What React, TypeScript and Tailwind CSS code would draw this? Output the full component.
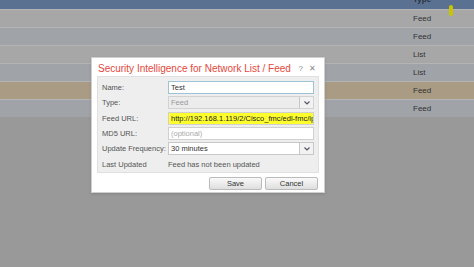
import React from 'react';

const rows = [
  { type: 'Feed', bg: 'bg-[#a7a7a7]' },
  { type: 'Feed', bg: 'bg-[#a0a3a8]' },
  { type: 'List', bg: 'bg-[#a7a7a7]' },
  { type: 'List', bg: 'bg-[#a0a3a8]' },
  { type: 'Feed', bg: 'bg-[#aa9b84]' },
  { type: 'Feed', bg: 'bg-[#a0a3a8]' },
];

const Field: React.FC<{ label: string; children: React.ReactNode }> = ({ label, children }) => (
  <div className="flex items-center h-[15.5px]">
    <span className="w-[66px] shrink-0 text-[#555]">{label}</span>
    {children}
  </div>
);

const Arrow = () => (
  <div className="w-[14px] self-stretch border-l border-[#c8c8c8] bg-[#f2f2f2] flex items-center justify-center">
    <svg width="6" height="4" viewBox="0 0 6 4">
      <path d="M0.5 0.5 L3 3 L5.5 0.5" stroke="#556" strokeWidth="1.2" fill="none" />
    </svg>
  </div>
);

const App: React.FC = () => {
  return (
    <div className="relative w-[474px] h-[267px] overflow-hidden bg-[#999999] font-['Liberation_Sans',Arial,sans-serif]">
      {/* list behind the overlay */}
      <div className="flex flex-col">
        <div className="h-[9px] bg-[#5b7191] overflow-hidden">
          <span className="block ml-[413px] mt-[-4px] text-[8px] font-bold text-[#2a3340] leading-none">Type</span>
        </div>
        {rows.map((r, i) => (
          <div key={i} className={`h-[18px] ${r.bg} border-t border-[#b4b4b4] flex items-center`}>
            <span className="ml-[413px] text-[8px] text-[#333]">{r.type}</span>
          </div>
        ))}
      </div>
      <div className="absolute left-[449px] top-[5px] w-[4px] h-[11px] bg-[#c8c400] rounded-sm" />

      {/* modal */}
      <div className="absolute left-[91px] top-[57px] w-[234px] h-[136px] bg-white border border-[#cfcfcf] shadow-sm flex flex-col">
        <div className="flex items-center justify-between pl-[6px] h-[18px] pt-[3px]">
          <span className="text-[10px] text-[#e5473d] whitespace-nowrap">
            Security Intelligence for Network List / Feed
          </span>
          <span className="flex gap-[6px] text-[8px] text-[#888] mr-[8px]">
            <span>?</span>
            <span>✕</span>
          </span>
        </div>
        <div className="mx-[5px] h-[97px] bg-[#eeeeee] border border-[#e0e0e0] px-[4px] pt-[3px] text-[7.5px] flex flex-col">
          <Field label="Name:">
            <div className="w-[149px] h-[13px] bg-white border border-[#9cc3d6] flex items-center px-[2px] text-[#333]">Test</div>
          </Field>
          <Field label="Type:">
            <div className="w-[149px] h-[13px] bg-[#ececec] border border-[#d2d2d2] flex items-center text-[#999]">
              <span className="flex-1 px-[2px]">Feed</span>
              <Arrow />
            </div>
          </Field>
          <Field label="Feed URL:">
            <div className="w-[149px] h-[13px] bg-[#ffff2e] border border-[#d0d0d0] flex items-center px-[2px] text-[#222] overflow-hidden whitespace-nowrap">
              http://192.168.1.119/2/Cisco_fmc/edl-fmc/ip
            </div>
          </Field>
          <Field label="MD5 URL:">
            <div className="w-[149px] h-[13px] bg-white border border-[#d0d0d0] flex items-center px-[2px] text-[#aaa]">(optional)</div>
          </Field>
          <Field label="Update Frequency:">
            <div className="w-[149px] h-[13px] bg-white border border-[#c8c8c8] flex items-center text-[#333]">
              <span className="flex-1 px-[2px]">30 minutes</span>
              <Arrow />
            </div>
          </Field>
          <Field label="Last Updated">
            <span className="text-[#555]">Feed has not been updated</span>
          </Field>
        </div>
        <div className="flex justify-end gap-[3px] pr-[6px] pt-[4px] text-[7.5px] text-[#333]">
          <button className="w-[53px] h-[13px] border border-[#bbb] rounded-[2px] bg-gradient-to-b from-[#fafafa] to-[#dedede]">Save</button>
          <button className="w-[53px] h-[13px] border border-[#bbb] rounded-[2px] bg-gradient-to-b from-[#fafafa] to-[#dedede]">Cancel</button>
        </div>
      </div>
    </div>
  );
};

export default App;
